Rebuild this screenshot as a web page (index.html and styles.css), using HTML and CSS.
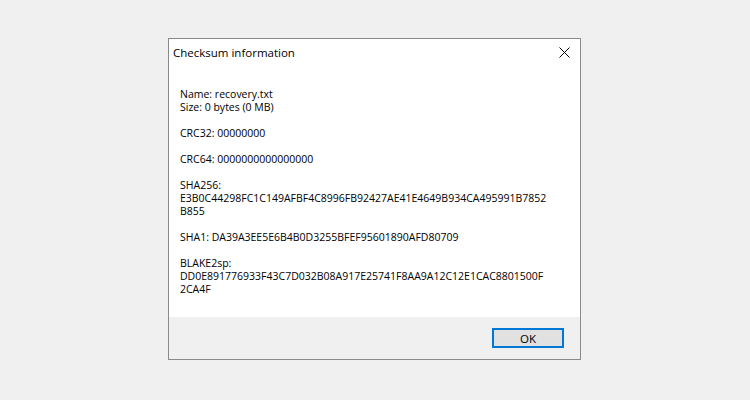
FILE: index.html
```html
<!DOCTYPE html>
<html>
<head>
<meta charset="utf-8">
<link rel="stylesheet" href="styles.css">
</head>
<body>
<div class="stage">
  <div class="dialog">
    <div class="titlebar">
      <span class="title">Checksum information</span>
      <span class="close" aria-label="Close">
        <svg width="11" height="11" viewBox="0 0 11 11"><path d="M0.5 0.5L10.5 10.5M10.5 0.5L0.5 10.5" stroke="#000" stroke-width="1" fill="none"/></svg>
      </span>
    </div>
    <div class="content">
      <p>Name: recovery.txt<br>Size: 0 bytes (0 MB)</p>
      <p>CRC32: 00000000</p>
      <p>CRC64: 0000000000000000</p>
      <p>SHA256:<br>E3B0C44298FC1C149AFBF4C8996FB92427AE41E4649B934CA495991B7852<br>B855</p>
      <p>SHA1: DA39A3EE5E6B4B0D3255BFEF95601890AFD80709</p>
      <p>BLAKE2sp:<br>DD0E891776933F43C7D032B08A917E25741F8AA9A12C12E1CAC8801500F<br>2CA4F</p>
    </div>
    <div class="footer">
      <button class="ok">OK</button>
    </div>
  </div>
</div>
</body>
</html>
```
FILE: styles.css
```css
html, body {
  margin: 0;
  padding: 0;
  background: #f0f0f0;
  width: 750px;
  height: 400px;
  overflow: hidden;
}
.stage {
  padding: 38px 0 0 168px;
  font-family: "Open Sans", "Noto Sans", "Liberation Sans", sans-serif;
  font-size: 10.5px;
  color: #000;
}
.dialog {
  width: 411px;
  height: 320px;
  border: 1px solid #8a8a8a;
  background: #fff;
  display: flex;
  flex-direction: column;
}
.titlebar {
  height: 26px;
  display: flex;
  align-items: center;
  justify-content: space-between;
  padding: 0 10px 0 4px;
  font-size: 11.5px;
}
.close {
  display: flex;
  width: 11px;
  height: 11px;
}
.content {
  flex: 1;
  padding: 23px 0 0 11px;
  line-height: 13px;
}
.content p {
  margin: 0 0 13px 0;
}
.footer {
  height: 42px;
  background: #f0f0f0;
  display: flex;
  align-items: center;
  justify-content: flex-end;
  padding-right: 16px;
}
.ok {
  width: 72px;
  height: 20px;
  margin: 0;
  padding: 0;
  border: 2px solid #0078d7;
  background: #e1e1e1;
  font-family: inherit;
  font-size: 11.5px;
  color: #000;
}
```
